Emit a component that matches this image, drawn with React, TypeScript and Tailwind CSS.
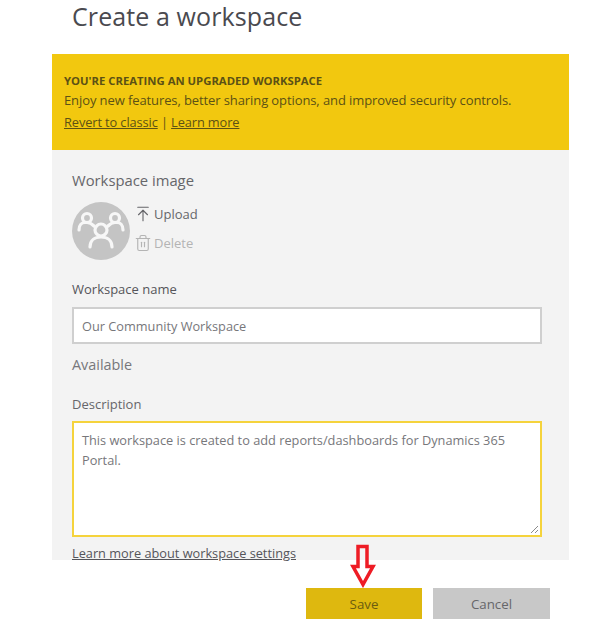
import { ArrowUpToLine, Trash2 } from 'lucide-react';

const font = { fontFamily: '"Open Sans", sans-serif' };

function GroupAvatar() {
  return (
    <div className="flex h-[58px] w-[58px] shrink-0 items-center justify-center rounded-full bg-[#c4c4c4]">
      <svg viewBox="0 0 58 58" className="h-[58px] w-[58px]" fill="none" stroke="#f7f7f7" strokeWidth="3.200">
        <circle cx="15" cy="16" r="4.500" />
        <circle cx="43" cy="16" r="4.500" />
        <circle cx="29" cy="28" r="6" />
        <path d="M7 28c0-5 3-7.500 6-7.500M22 24c-2-2-4-3.500-7-3.500" strokeLinecap="round" />
        <path d="M51 28c0-5-3-7.500-6-7.500M36 24c2-2 4-3.500 7-3.500" strokeLinecap="round" />
        <path d="M18 45c0-7 5-10 11-10s11 3 11 10" strokeLinecap="round" />
      </svg>
    </div>
  );
}

function DownArrow() {
  return (
    <svg viewBox="0 0 26 44" className="absolute left-[350px] top-[544px] h-[44px] w-[26px]" fill="none" stroke="#ee1c25" strokeWidth="3.500">
      <path d="M8 2.500h9v20h6L13 40.500 3 22.500h5z" strokeLinejoin="miter" />
    </svg>
  );
}

export default function App() {
  return (
    <div className="relative h-[630px] w-[600px] overflow-hidden bg-white" style={font}>
      <h1 className="ml-[72px] h-[54px] text-[25px] leading-[32px] tracking-[0.1px] text-[#4a4a4f]">Create a workspace</h1>

      <div className="mx-[52px] w-[517px]">
        <div className="h-[96px] bg-[#f2c80f] px-3 pt-[19px] text-[#5c5115]">
          <div className="text-[11.300px] font-bold leading-[16px]">YOU'RE CREATING AN UPGRADED WORKSPACE</div>
          <div className="mt-[1px] text-[13px] leading-[20px] tracking-[-0.1px]">Enjoy new features, better sharing options, and improved security controls.</div>
          <div className="mt-[2px] text-[12.800px] leading-[20px] tracking-[-0.1px]">
            <span className="underline">Revert to classic</span> | <span className="underline">Learn more</span>
          </div>
        </div>

        <div className="flex h-[410px] flex-col bg-[#f3f3f3] px-5 text-[#66666a]">
          <div className="mt-[20px] text-[14.800px] leading-[20px]">Workspace image</div>
          <div className="mt-[12px] flex gap-[4px]">
            <GroupAvatar />
            <div className="flex flex-col text-[13px] leading-[18px]">
              <div className="mt-[3px] flex items-center gap-[2px]">
                <ArrowUpToLine size={18} strokeWidth={1.5} />
                <span>Upload</span>
              </div>
              <div className="mt-[11px] flex items-center gap-[2px] text-[#b4b4b4]">
                <Trash2 size={18} strokeWidth={1.5} />
                <span>Delete</span>
              </div>
            </div>
          </div>

          <div className="mt-[20px] text-[13px] leading-[18px] text-[#55555a]">Workspace name</div>
          <div className="mt-[9px] flex h-[37px] w-[470px] shrink-0 items-center border-2 border-[#cfcfcf] bg-white px-2 pt-[2px] text-[12.750px] text-[#77777b]">Our Community Workspace</div>
          <div className="mt-[11px] text-[14.400px] leading-[20px] text-[#77777b]">Available</div>
          <div className="mt-[20px] text-[13px] leading-[18px]">Description</div>
          <div className="relative mt-[8px] h-[116px] w-[470px] shrink-0 border-2 border-[#f5d33c] bg-white px-2 pt-[7px] text-[12.770px] leading-[20px] text-[#77777b]">
            This workspace is created to add reports/dashboards for Dynamics 365 Portal.
            <svg viewBox="0 0 9 9" className="absolute bottom-[1px] right-[1px] h-[9px] w-[9px]" stroke="#8a8a8a" strokeWidth="1">
              <path d="M1 8l7-7M5 8l3-3" />
            </svg>
          </div>
          <div className="mt-[7px] text-[12.750px] leading-[18px] text-[#55555a] underline">Learn more about workspace settings</div>
        </div>

        <div className="mt-[28px] ml-[254px] flex gap-[11px] text-[13.300px]">
          <button className="h-[31px] w-[116px] pt-[2px] bg-[#deb80f] text-[#6b5c10]">Save</button>
          <button className="h-[31px] w-[117px] pt-[2px] bg-[#c8c8c8] text-[#66666a]">Cancel</button>
        </div>
      </div>

      <DownArrow />
    </div>
  );
}
